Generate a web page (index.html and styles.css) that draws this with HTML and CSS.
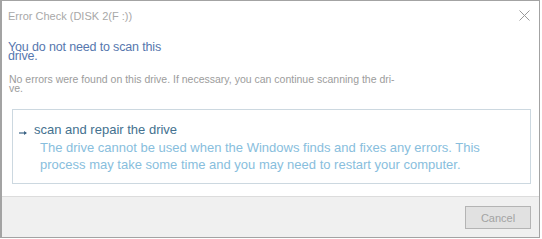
FILE: index.html
```html
<!DOCTYPE html>
<html>
<head>
<meta charset="utf-8">
<link rel="stylesheet" href="styles.css">
</head>
<body>
<div class="window">
  <div class="titlebar">
    <span class="title">Error Check (DISK 2(F :))</span>
    <svg class="close" width="11" height="11" viewBox="0 0 11 11"><path d="M0.5 0.5L10.5 10.5M10.5 0.5L0.5 10.5" stroke="#9a9a9a" stroke-width="1" fill="none"/></svg>
  </div>
  <div class="main">
    <div class="heading">You do not need to scan this<br>drive.</div>
    <div class="subtext">No errors were found on this drive. If necessary, you can continue scanning the dri-<br>ve.</div>
    <div class="option">
      <div class="option-head">
        <svg class="arrow" width="8" height="5" viewBox="0 0 8 5"><path d="M0 3H7" stroke="#3d6485" stroke-width="1.2"/><path d="M5 1L8 3L5 5Z" fill="#3d6485"/></svg>
        <span class="option-title">scan and repair the drive</span>
      </div>
      <div class="option-desc">The drive cannot be used when the Windows finds and fixes any errors. This<br>process may take some time and you may need to restart your computer.</div>
    </div>
  </div>
  <div class="footer">
    <button class="cancel">Cancel</button>
  </div>
</div>
</body>
</html>
```

FILE: styles.css
```css
html, body {
  margin: 0;
  padding: 0;
  background: #ffffff;
}
body {
  font-family: "Liberation Sans", Arial, sans-serif;
}
.window {
  box-sizing: border-box;
  width: 540px;
  height: 238px;
  border: 1px solid #a3a3a3;
  border-left: 2px solid #a3a3a3;
  background: #ffffff;
  display: flex;
  flex-direction: column;
}
.titlebar {
  display: flex;
  align-items: flex-start;
  justify-content: space-between;
  height: 30px;
  padding: 0 8px 0 6px;
}
.title {
  font-size: 11px;
  line-height: 13px;
  color: #a8a8a8;
  margin-top: 9px;
}
.close {
  margin-top: 9px;
  margin-right: 1px;
}
.main {
  flex: 1;
  display: flex;
  flex-direction: column;
}
.heading {
  margin: 12px 0 0 6px;
  font-size: 12.5px;
  letter-spacing: -0.15px;
  line-height: 9px;
  color: #5677ae;
}
.subtext {
  margin: 14px 0 0 7px;
  font-size: 10.5px;
  line-height: 9px;
  color: #9c9c9c;
}
.option {
  margin: 16px 8px 0 10px;
  border: 1px solid #ccd8e0;
  padding: 11px 0 10px 6px;
}
.option-head {
  display: flex;
  align-items: center;
  gap: 7px;
  height: 17px;
}
.arrow {
  margin-top: 5px;
}
.option-title {
  font-size: 13px;
  line-height: 17px;
  color: #44718f;
}
.option-desc {
  margin: 1px 0 0 21px;
  font-size: 13px;
  line-height: 17px;
  color: #88bedd;
}
.footer {
  height: 41px;
  border-top: 1px solid #dcdcdc;
  background: #f0f0f0;
  display: flex;
  justify-content: flex-end;
  align-items: flex-start;
  padding: 9px 8px 0 0;
  box-sizing: border-box;
}
.cancel {
  width: 66px;
  height: 23px;
  border: 1px solid #b4b4b4;
  background: #e1e1e1;
  color: #a3a3a3;
  font-family: "Liberation Sans", Arial, sans-serif;
  font-size: 11px;
  padding: 0;
}
```
